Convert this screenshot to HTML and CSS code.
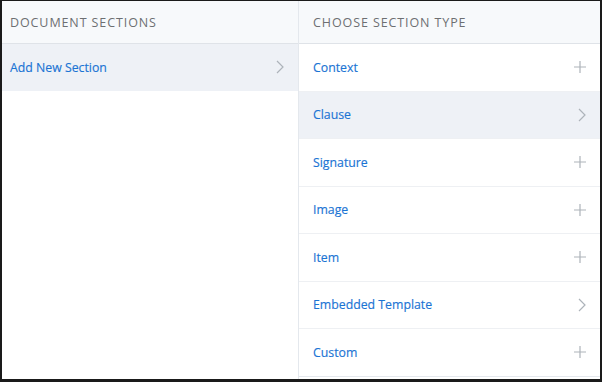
FILE: index.html
```html
<!DOCTYPE html>
<html lang="en">

<head>
    <meta charset="UTF-8">
    <meta name="viewport" content="width=device-width, initial-scale=1.0">
    <title>Section Picker</title>
    <link rel="stylesheet" href="styles.css">
</head>

<body>
    <div class="frame">
        <div class="column left">
            <div class="col-header">Document Sections</div>
            <div class="row active">
                <span class="label">Add New Section</span>
                <svg class="icon" width="8" height="14" viewBox="0 0 8 14"><path d="M1 1 L7 7 L1 13" /></svg>
            </div>
        </div>
        <div class="column right">
            <div class="col-header">Choose Section Type</div>
            <div class="list">
                <div class="row">
                    <span class="label">Context</span>
                    <svg class="icon" width="12" height="12" viewBox="0 0 12 12"><path d="M6 0 V12 M0 6 H12" /></svg>
                </div>
                <div class="row active">
                    <span class="label">Clause</span>
                    <svg class="icon" width="8" height="14" viewBox="0 0 8 14"><path d="M1 1 L7 7 L1 13" /></svg>
                </div>
                <div class="row">
                    <span class="label">Signature</span>
                    <svg class="icon" width="12" height="12" viewBox="0 0 12 12"><path d="M6 0 V12 M0 6 H12" /></svg>
                </div>
                <div class="row">
                    <span class="label">Image</span>
                    <svg class="icon" width="12" height="12" viewBox="0 0 12 12"><path d="M6 0 V12 M0 6 H12" /></svg>
                </div>
                <div class="row">
                    <span class="label">Item</span>
                    <svg class="icon" width="12" height="12" viewBox="0 0 12 12"><path d="M6 0 V12 M0 6 H12" /></svg>
                </div>
                <div class="row">
                    <span class="label">Embedded Template</span>
                    <svg class="icon" width="8" height="14" viewBox="0 0 8 14"><path d="M1 1 L7 7 L1 13" /></svg>
                </div>
                <div class="row">
                    <span class="label">Custom</span>
                    <svg class="icon" width="12" height="12" viewBox="0 0 12 12"><path d="M6 0 V12 M0 6 H12" /></svg>
                </div>
            </div>
        </div>
    </div>
</body>

</html>
```

FILE: styles.css
```css
html,
body {
    margin: 0;
    padding: 0;
    background-color: #111;
}

body {
    font-family: 'Open Sans', 'Liberation Sans', sans-serif;
}

.frame {
    box-sizing: border-box;
    width: 602px;
    height: 382px;
    border-style: solid;
    border-color: #1a1a1a;
    border-width: 1px 2px 3px 2px;
    background-color: #fff;
    display: flex;
}

.column {
    display: flex;
    flex-direction: column;
}

.left {
    width: 296px;
    border-right: 1px solid #e4e8ed;
}

.right {
    flex: 1;
}

.col-header {
    height: 42px;
    flex-shrink: 0;
    display: flex;
    align-items: center;
    background-color: #f7f9fb;
    border-bottom: 1px solid #dfe3e8;
    color: #6d6f72;
    font-size: 12.5px;
    letter-spacing: 0.9px;
    text-transform: uppercase;
}

.left .col-header,
.left .row {
    padding-left: 8px;
    padding-right: 12px;
}

.right .col-header,
.right .row {
    padding-left: 14px;
    padding-right: 12px;
}

.row {
    display: flex;
    align-items: center;
    justify-content: space-between;
    height: 46.5px;
    flex-shrink: 0;
    border-bottom: 1px solid #eef0f3;
}

.list .row:last-child {
    border-bottom: 1px solid #e4e8ed;
}

.left .row {
    border-bottom: none;
}

.row.active {
    background-color: #eef1f6;
}

.label {
    color: #1b74d4;
    font-size: 12.3px;
    -webkit-text-stroke: 0.15px #1b74d4;
}

.icon {
    fill: none;
    stroke: #adb3ba;
    stroke-width: 1.2;
    margin-right: 2px;
}
```
